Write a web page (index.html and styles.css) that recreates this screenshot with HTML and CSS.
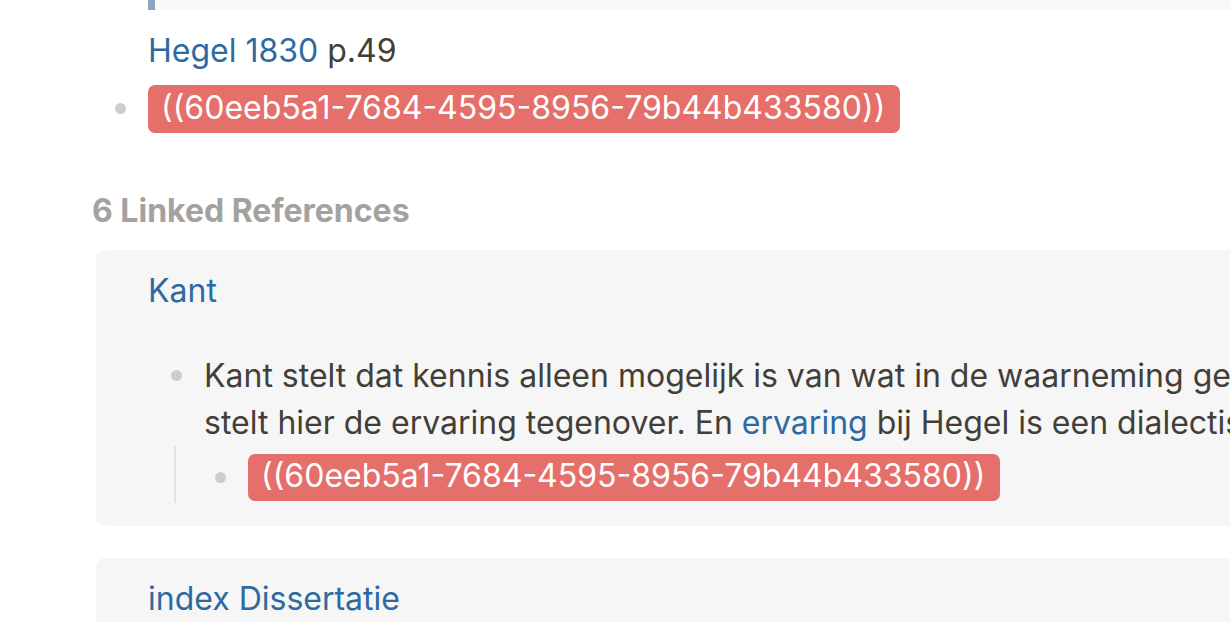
FILE: index.html
```html
<!DOCTYPE html>
<html lang="nl">
<head>
<meta charset="utf-8">
<title>Hegel 1830</title>
<link rel="stylesheet" href="styles.css">
</head>
<body>
<div class="page">
  <div class="quote"></div>
  <div class="line"><a class="link">Hegel 1830</a> p.49</div>
  <div class="block top">
    <div class="row">
      <div class="bullet-wrap"><span class="dot"></span></div>
      <div class="content"><span class="ref">((60eeb5a1-7684-4595-8956-79b44b433580))</span></div>
    </div>
  </div>

  <div class="heading">6 Linked References</div>

  <div class="card">
    <div class="card-title"><a class="link">Kant</a></div>
    <div class="block inner">
      <div class="row">
        <div class="bullet-wrap"><span class="dot"></span></div>
        <div class="content text">Kant stelt dat kennis alleen mogelijk is van wat in de waarneming ge<br>stelt hier de ervaring tegenover. En <a class="link">ervaring</a> bij Hegel is een dialectis</div>
      </div>
      <div class="children">
        <div class="block">
          <div class="row">
            <div class="bullet-wrap"><span class="dot"></span></div>
            <div class="content"><span class="ref">((60eeb5a1-7684-4595-8956-79b44b433580))</span></div>
          </div>
        </div>
      </div>
    </div>
  </div>

  <div class="card second">
    <div class="card-title"><a class="link">index Dissertatie</a></div>
  </div>
</div>
</body>
</html>
```

FILE: styles.css
```css
html, body {
  margin: 0;
  padding: 0;
  background: #ffffff;
  overflow: hidden;
  height: 622px;
}

body {
  font-family: Inter, "Noto Sans", sans-serif;
  font-size: 32px;
  line-height: 47px;
  color: #433f38;
}

.page {
  width: 1230px;
  padding-left: 92px;
  box-sizing: border-box;
  overflow: hidden;
}

.link {
  color: #2d6aa1;
  text-decoration: none;
}

.quote {
  margin-left: 56px;
  height: 10px;
  background: #f9f8f6;
  border-left: 7px solid #8ea3bf;
}

.line {
  margin-left: 56px;
  margin-top: 17px;
  white-space: nowrap;
}

.block.top {
  margin-top: 11px;
  margin-left: 14px;
}

.row {
  display: flex;
  align-items: flex-start;
}

.bullet-wrap {
  flex: 0 0 28px;
  height: 47px;
  margin-right: 14px;
  display: flex;
  align-items: center;
  justify-content: center;
}

.dot {
  width: 11px;
  height: 11px;
  border-radius: 50%;
  background: #cdcdcd;
}

.content {
  white-space: nowrap;
}

.ref {
  display: inline-block;
  vertical-align: top;
  background: #e5706b;
  color: #ffffff;
  line-height: 34px;
  padding: 5.5px 15px 8px 13px;
  border-radius: 7px;
}

.heading {
  margin-top: 54px;
  font-weight: 700;
  color: #a3a29e;
}

.card {
  margin-top: 16px;
  margin-left: 4px;
  margin-right: -40px;
  background: #f6f6f6;
  border-radius: 9px;
  padding: 17px 0 23px 52px;
}

.card.second {
  margin-top: 32px;
}

.block.inner {
  margin-top: 38px;
  margin-left: 14px;
}

.children {
  margin-top: 0;
  margin-left: 12px;
  border-left: 2px solid #e2e2e2;
  padding: 8px 0 1.5px 30px;
}
```
